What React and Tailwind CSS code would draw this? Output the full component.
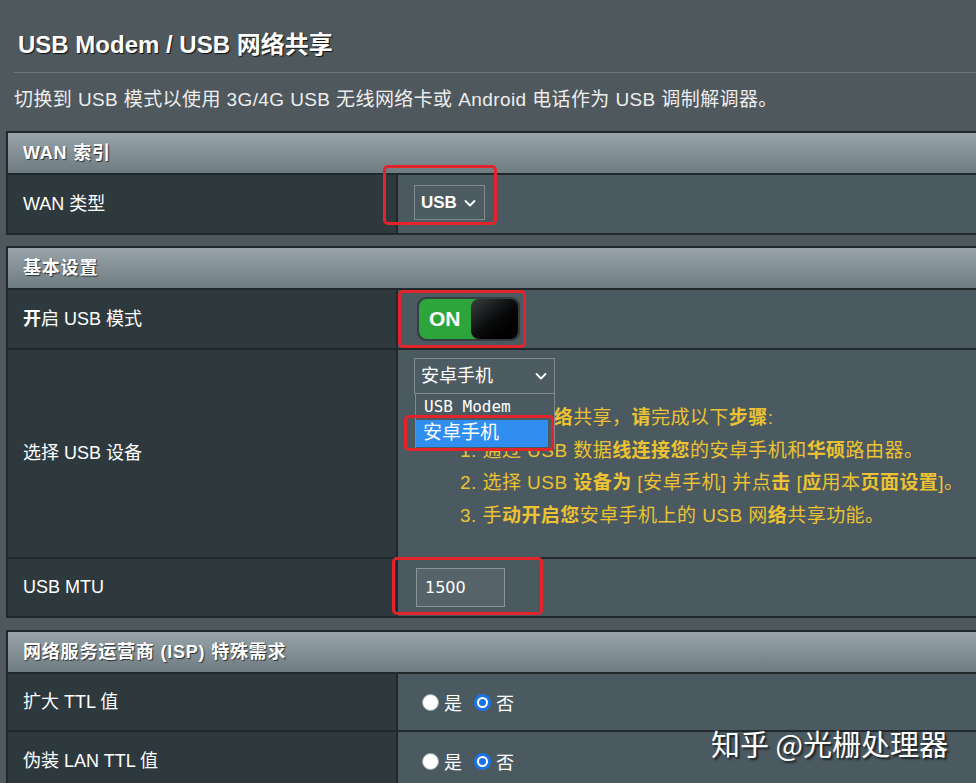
const FONT = 'font-[family-name:Liberation_Sans,Noto_Sans_CJK_SC,sans-serif]';

function Chevron({ className = '' }) {
  return (
    <svg width="14" height="14" viewBox="0 0 14 14" fill="none" className={className}>
      <path d="M2.5 5 L7 9.5 L11.5 5" stroke="#ffffff" strokeWidth="1.8" strokeLinecap="round" strokeLinejoin="round" />
    </svg>
  );
}

function Section({ title, children, className = '' }) {
  return (
    <div className={`ml-[6px] w-[990px] border-2 border-r-0 border-[#20282c] ${className}`}>
      <div className="h-[40px] flex items-center pl-[15px] bg-gradient-to-b from-[#98a4a9] to-[#6e7b81] text-[18px] tracking-[0.8px] font-bold text-white [text-shadow:1px_1px_1px_#2a3236]">
        {title}
      </div>
      {children}
    </div>
  );
}

function Row({ label, h, children, alignTop = false }) {
  return (
    <div className={`grid grid-cols-[390px_1fr] border-t-2 border-[#20282c] ${h}`}>
      <div className="bg-[#2e393e] border-r-2 border-[#20282c] pl-[15px] flex items-center text-[18px] text-white">
        {label}
      </div>
      <div className={`bg-[#4b5a60] flex ${alignTop ? 'items-start' : 'items-center'}`}>{children}</div>
    </div>
  );
}

function Radio({ checked }) {
  if (checked) {
    return (
      <span className="w-[17px] h-[17px] rounded-full bg-[#1a73e8] flex items-center justify-center">
        <span className="w-[11px] h-[11px] rounded-full bg-white flex items-center justify-center">
          <span className="w-[7px] h-[7px] rounded-full bg-[#1a73e8]" />
        </span>
      </span>
    );
  }
  return <span className="w-[17px] h-[17px] rounded-full bg-white border border-[#9aa4a8]" />;
}

function YesNo() {
  return (
    <div className="pl-[24px] flex items-center text-[18px] text-white">
      <Radio checked={false} />
      <span className="ml-[5px] mt-[4px]">是</span>
      <span className="ml-[12px]"><Radio checked /></span>
      <span className="ml-[5px] mt-[4px]">否</span>
    </div>
  );
}

const B = ({ children }) => <span className="font-bold">{children}</span>;

export default function App() {
  return (
    <div className={`relative w-[976px] h-[783px] overflow-hidden bg-[#4e585d] text-white ${FONT}`}>
      <div className="pl-[18px] pt-[31px] leading-[28px] text-[24px] font-bold [text-shadow:1px_1px_1px_#111]">
        USB Modem / USB 网络共享
      </div>
      <div className="ml-[14px] mt-[13px] h-px bg-[#6e797e]" />
      <div className="pl-[14px] mt-[14px] leading-[26px] text-[19px] tracking-[0.4px] text-[#eeeeee]">
        切换到 USB 模式以使用 3G/4G USB 无线网络卡或 Android 电话作为 USB 调制解调器。
      </div>

      <Section title="WAN 索引" className="mt-[18px]">
        <Row label="WAN 类型" h="h-[60px]">
          <div className="ml-4 w-[71px] h-[35px] border border-[#7f8b90] bg-[#4d5c62] flex items-center pl-[6px] gap-[6px] -mt-[3px]">
            <span className="text-[17px] font-bold">USB</span>
            <Chevron />
          </div>
        </Row>
      </Section>

      <Section title="基本设置" className="mt-[11px]">
        <Row label={<span><B>开</B>启 USB 模式</span>} h="h-[60px]">
          <div className="ml-[19px] w-[103px] h-[44px] rounded-[9px] bg-[#333d42] p-[2px] flex">
            <div className="w-[60px] h-full rounded-l-[8px] bg-[#2ea53a] flex items-center pl-[10px] text-[21px] font-bold">
              ON
            </div>
            <div className="w-[48px] h-full -ml-[7px] rounded-[8px] bg-gradient-to-br from-[#3c4042] via-[#0b0c0d] to-black" />
          </div>
        </Row>
        <Row label="选择 USB 设备" h="h-[209px]" alignTop>
          <div className="pt-2 pl-4">
            <div className="relative">
              <div className="w-[141px] h-[36px] border border-[#7f8b90] bg-[#4d5c62] flex items-center justify-between pl-[6px] pr-[6px]">
                <span className="text-[18px]">安卓手机</span>
                <Chevron />
              </div>
              <div className="absolute left-[1px] top-[36px] w-[140px] bg-[#4b5a60] border-l border-r border-[#7f8b90] z-10 pb-[2px]">
                <div className="h-[26px] flex items-center pl-[8px] font-[family-name:DejaVu_Sans_Mono,monospace] text-[16px]">
                  USB Modem
                </div>
                <div className="h-[27px] mr-[6px] bg-[#2f8ef0] flex items-center pl-[7px] text-[19px]">
                  安卓手机
                </div>
              </div>
            </div>
            <div className="mt-2 text-[19px] leading-[32.5px] tracking-[0.45px] text-[#ecc232]">
              <div className="pl-[10px]">要使用 USB 网<B>络</B>共享，<B>请</B>完成以下<B>步骤</B>:</div>
              <div className="pl-[46px]">1. 通过 USB 数据<B>线连接您</B>的安卓手机和<B>华硕</B>路由器。</div>
              <div className="pl-[46px]">2. 选择 USB <B>设备为</B> [安卓手机] 并点<B>击</B> [<B>应</B>用本<B>页面设置</B>]。</div>
              <div className="pl-[46px]">3. 手<B>动开启您</B>安卓手机上的 USB 网<B>络</B>共享功能。</div>
            </div>
          </div>
        </Row>
        <Row label="USB MTU" h="h-[59px]">
          <div className="ml-[18px] w-[89px] h-[39px] border border-[#8a969b] bg-[#56646a] flex items-center pl-[8px] font-[family-name:DejaVu_Sans,sans-serif] text-[16px]">
            1500
          </div>
        </Row>
      </Section>

      <Section title="网络服务运营商 (ISP) 特殊需求" className="mt-[12px]">
        <Row label="扩大 TTL 值" h="h-[58px]">
          <YesNo />
        </Row>
        <Row label="伪装 LAN TTL 值" h="h-[60px]">
          <YesNo />
        </Row>
      </Section>

      {/* red annotation boxes */}
      <div className="absolute left-[383px] top-[165px] w-[114px] h-[60px] border-[3px] border-[#e3242b] rounded-[5px]" />
      <div className="absolute left-[398px] top-[290px] w-[128px] h-[58px] border-[3px] border-[#e3242b] rounded-[5px]" />
      <div className="absolute left-[404px] top-[415px] w-[150px] h-[36px] border-[3px] border-[#e3242b] rounded-[5px] z-20" />
      <div className="absolute left-[392px] top-[557px] w-[151px] h-[58px] border-[3px] border-[#e3242b] rounded-[5px]" />

      {/* watermark */}
      <div className="absolute left-[711px] top-[725px] text-[29px] leading-[36px] font-[family-name:Noto_Sans_CJK_SC,sans-serif] text-white [text-shadow:2px_2px_2px_#1a1f22]">
        知乎 @光栅处理器
      </div>
    </div>
  );
}
